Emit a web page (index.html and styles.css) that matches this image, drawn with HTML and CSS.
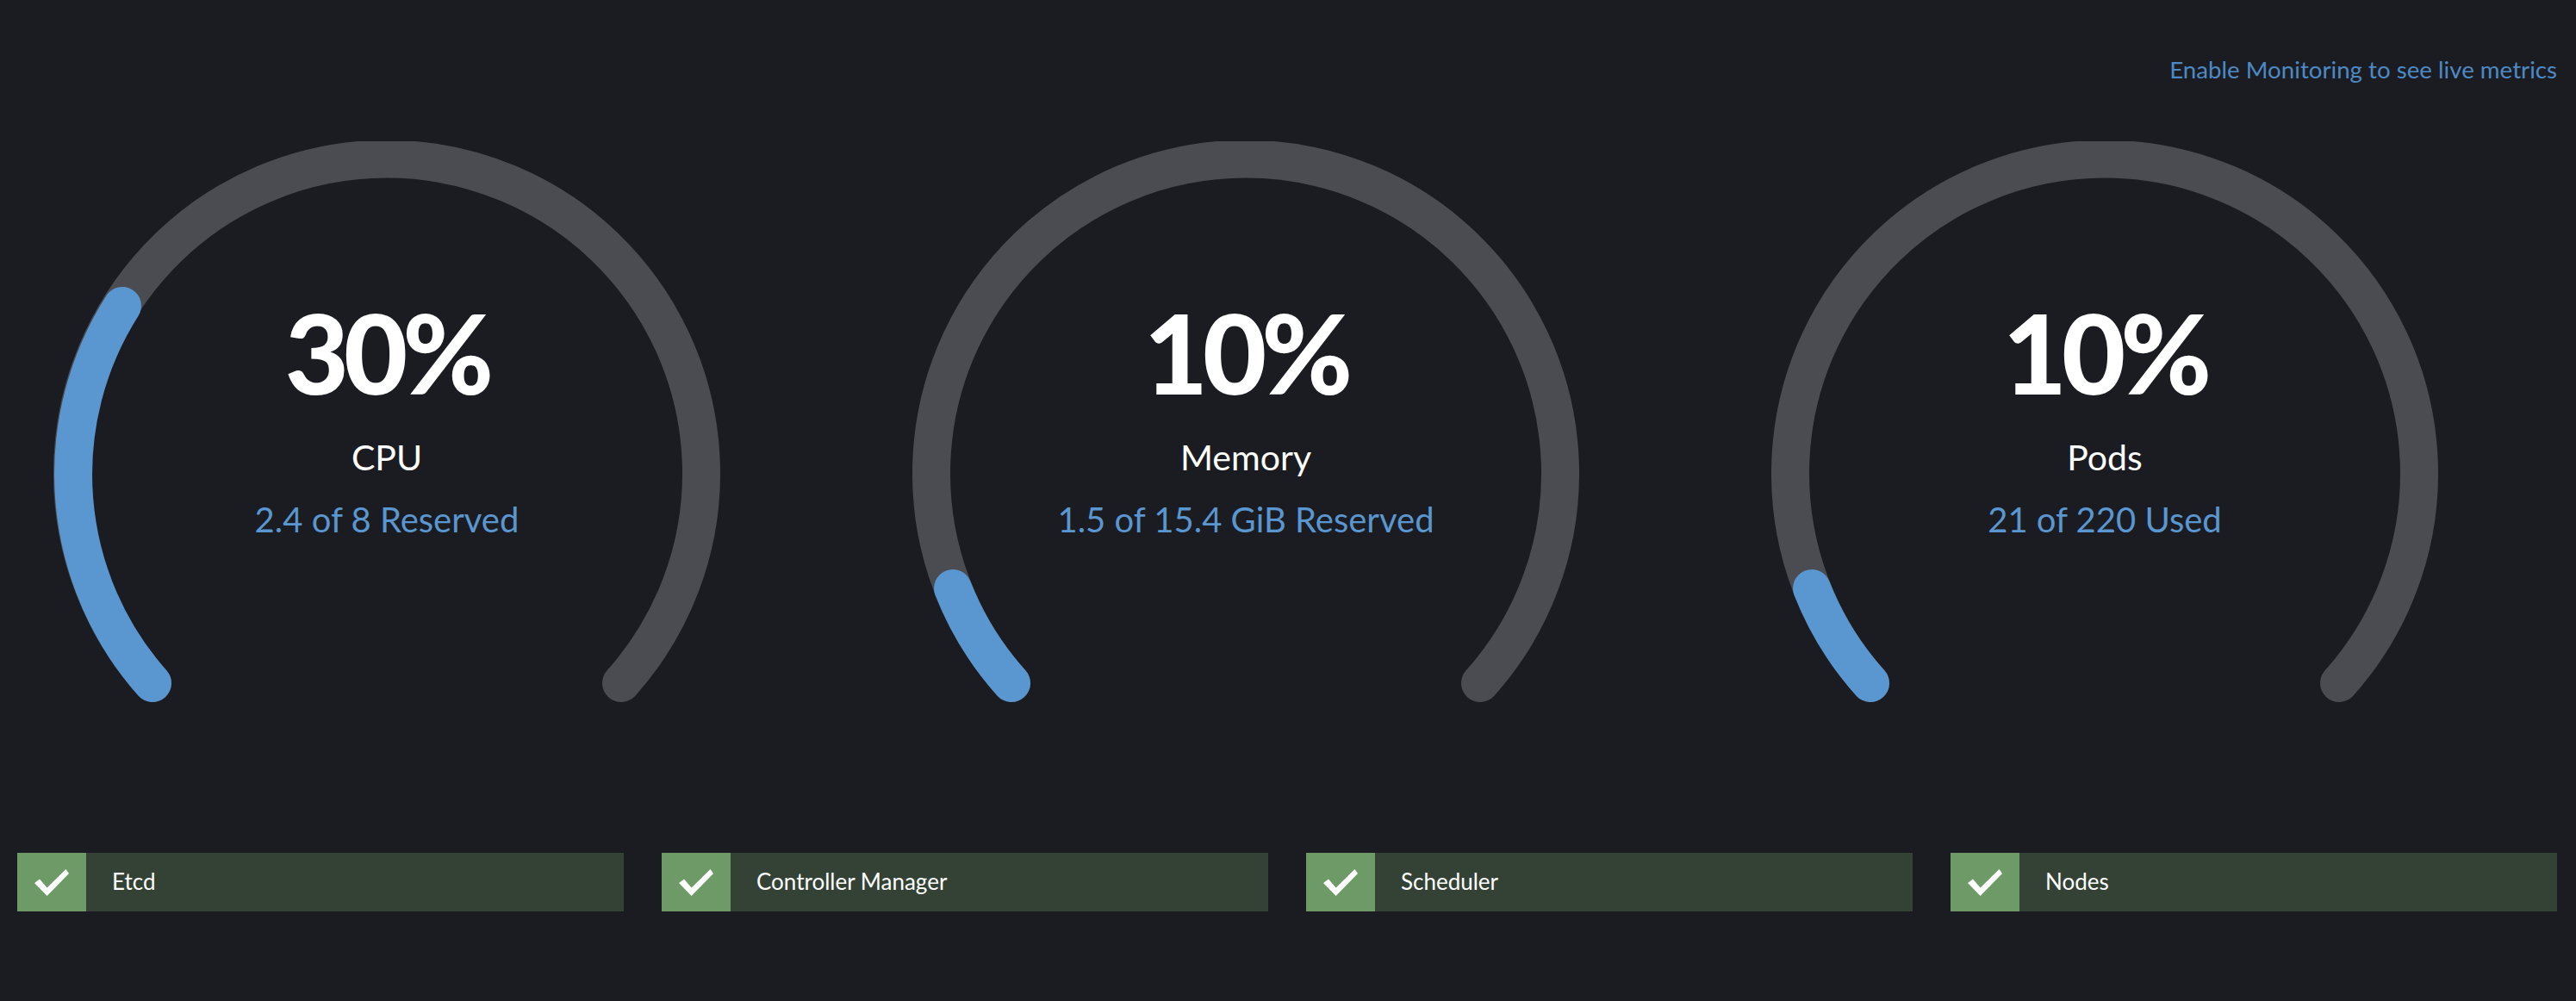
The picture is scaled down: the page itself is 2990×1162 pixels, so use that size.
FILE: index.html
```html
<!DOCTYPE html>
<html lang="en">
<head>
<meta charset="utf-8">
<title>Cluster dashboard</title>
<link rel="stylesheet" href="styles.css">
</head>
<body>
<main class="page">
  <div class="notice"><a class="notice-link">Enable Monitoring to see live metrics</a></div>
  <section class="gauges">
    <div class="gauge">
      <svg class="gauge-arc" viewBox="0 0 774 772" aria-hidden="true">
        <path class="track" d="M115 629 A365 365 0 1 1 659 629"/>
        <path class="fill" d="M115 629 A365 365 0 0 1 80 191"/>
      </svg>
      <div class="gauge-text">
        <div class="gauge-value">30%</div>
        <div class="gauge-title">CPU</div>
        <div class="gauge-sub">2.4 of 8 Reserved</div>
      </div>
    </div>
    <div class="gauge">
      <svg class="gauge-arc" viewBox="0 0 774 772" aria-hidden="true">
        <path class="track" d="M115 629 A365 365 0 1 1 659 629"/>
        <path class="fill" d="M115 629 A365 365 0 0 1 47 519"/>
      </svg>
      <div class="gauge-text">
        <div class="gauge-value">10%</div>
        <div class="gauge-title">Memory</div>
        <div class="gauge-sub">1.5 of 15.4 GiB Reserved</div>
      </div>
    </div>
    <div class="gauge">
      <svg class="gauge-arc" viewBox="0 0 774 772" aria-hidden="true">
        <path class="track" d="M115 629 A365 365 0 1 1 659 629"/>
        <path class="fill" d="M115 629 A365 365 0 0 1 47 519"/>
      </svg>
      <div class="gauge-text">
        <div class="gauge-value">10%</div>
        <div class="gauge-title">Pods</div>
        <div class="gauge-sub">21 of 220 Used</div>
      </div>
    </div>
  </section>
  <section class="statuses">
    <div class="status"><span class="status-icon"><svg viewBox="0 0 40 31" aria-hidden="true"><path d="M0 16 L6 11.5 L14.6 21.5 L36.5 0 L40 5 L14.6 31 Z"/></svg></span><span class="status-label">Etcd</span></div>
    <div class="status"><span class="status-icon"><svg viewBox="0 0 40 31" aria-hidden="true"><path d="M0 16 L6 11.5 L14.6 21.5 L36.5 0 L40 5 L14.6 31 Z"/></svg></span><span class="status-label">Controller Manager</span></div>
    <div class="status"><span class="status-icon"><svg viewBox="0 0 40 31" aria-hidden="true"><path d="M0 16 L6 11.5 L14.6 21.5 L36.5 0 L40 5 L14.6 31 Z"/></svg></span><span class="status-label">Scheduler</span></div>
    <div class="status"><span class="status-icon"><svg viewBox="0 0 40 31" aria-hidden="true"><path d="M0 16 L6 11.5 L14.6 21.5 L36.5 0 L40 5 L14.6 31 Z"/></svg></span><span class="status-label">Nodes</span></div>
  </section>
</main>
</body>
</html>
```
FILE: styles.css
```css
* { box-sizing: border-box; }
html, body { margin: 0; height: 100%; }
body {
  background: #1b1c21;
  color: #fff;
  font-family: Lato, "Open Sans", sans-serif;
}
.page { height: 1162px; padding: 0 20px; overflow: hidden; }
.notice {
  display: flex;
  justify-content: flex-end;
  height: 164px;
  padding-top: 63px;
  padding-right: 2px;
  font-size: 27.7px;
  line-height: 36px;
  color: #4d8ac5;
}
.gauges {
  display: flex;
  margin-left: 42px;
  gap: 223px;
}
.gauge { position: relative; width: 774px; height: 772px; flex: none; }
.gauge-arc { display: block; width: 774px; height: 772px; }
.track, .fill { fill: none; stroke-width: 44; stroke-linecap: round; }
.track { stroke: #4b4c51; }
.fill { stroke: #5a96cf; }
.gauge-text {
  position: absolute;
  left: 0; right: 0; top: 180px;
  text-align: center;
}
.gauge-value {
  font-size: 128px;
  font-weight: 900;
  line-height: 130px;
  letter-spacing: -6px;
}
.gauge-title { font-size: 41px; line-height: 50px; margin-top: 32px; }
.gauge-sub { font-size: 40px; line-height: 50px; margin-top: 22px; color: #5a96cf; }
.statuses {
  display: grid;
  grid-template-columns: repeat(4, 704px);
  column-gap: 44px;
  margin-top: 54px;
}
.status { display: flex; align-items: center; height: 68px; background: #344235; }
.status-icon {
  display: flex; align-items: center; justify-content: center;
  width: 80px; height: 68px; background: #6d9a66;
}
.status-icon svg { width: 40px; height: 31px; fill: #fff; }
.status-label { margin-left: 30px; margin-bottom: 2px; font-size: 26px; color: #fff; }
```
